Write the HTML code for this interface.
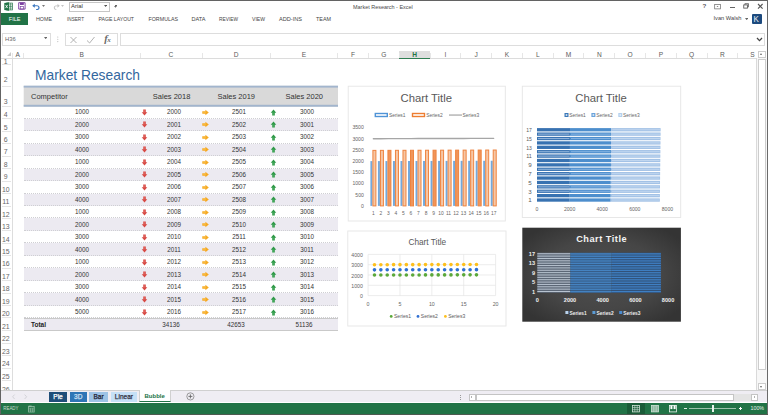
<!DOCTYPE html><html><head><meta charset="utf-8"><title>Market Research - Excel</title><style>
*{box-sizing:border-box;margin:0;padding:0}
html,body{width:768px;height:415px;overflow:hidden;background:#fff}
body{position:relative;font-family:"Liberation Sans",sans-serif;color:#444;font-size:6px}
.a{position:absolute}
.t{position:absolute;white-space:nowrap;line-height:1}
.tab{position:absolute;top:16px;font-size:5.7px;color:#444;line-height:6px;white-space:nowrap;letter-spacing:-0.1px}
.ch{position:absolute;top:51.2px;font-size:6.6px;line-height:8px;color:#5a5a5a;text-align:center;white-space:nowrap}
.rh{position:absolute;left:0.5px;width:10.5px;font-size:6.9px;line-height:8px;color:#666;text-align:center;white-space:nowrap}
.num{position:absolute;font-size:6.6px;transform:scaleX(0.95);line-height:7px;color:#333;text-align:center;white-space:nowrap;width:30px}
.hd{position:absolute;font-size:7.5px;line-height:9px;color:#333;white-space:nowrap}
</style></head><body>
<svg class="a" style="left:340px;top:0" width="90" height="12" viewBox="0 0 90 12" font-family="Liberation Sans, sans-serif"><text x="13" y="9" font-size="5.9" fill="#4a4a4a" textLength="59.8" lengthAdjust="spacingAndGlyphs">Market Research - Excel</text></svg>
<svg class="a" style="left:3.5px;top:2.2px" width="9" height="9" viewBox="0 0 10 10"><rect x="3" y="1.2" width="6.5" height="7.6" fill="#fff" stroke="#217346" stroke-width="0.8"/><path d="M5 3.2H9M5 5H9M5 6.8H9M7.3 1.2V8.8" stroke="#217346" stroke-width="0.6"/><path d="M0.3 1.2L5.6 0.2V9.8L0.3 8.8Z" fill="#217346"/><path d="M1.7 3.2L4.1 6.8M4.1 3.2L1.7 6.8" stroke="#fff" stroke-width="0.9"/></svg>
<svg class="a" style="left:18.2px;top:2.4px" width="7.8" height="7.8" viewBox="0 0 9 9"><path d="M0.8 0.8H8.2V8.2H0.8Z" fill="none" stroke="#7a3fa0" stroke-width="1.1"/><rect x="2.3" y="0.8" width="4.4" height="2.6" fill="#7a3fa0"/><rect x="2.6" y="5.3" width="3.8" height="2.9" fill="none" stroke="#7a3fa0" stroke-width="0.8"/></svg>
<svg class="a" style="left:32.3px;top:2.6px" width="8.4" height="7.6" viewBox="0 0 9 9" preserveAspectRatio="none"><path d="M1.2 3.2H5.2A2.3 2.3 0 0 1 5.2 7.8H4.4" fill="none" stroke="#3c78c0" stroke-width="1.3"/><path d="M0.2 3.2L3 0.8V5.6Z" fill="#3c78c0"/></svg>
<svg class="a" style="left:41.8px;top:5px" width="3" height="1.9" viewBox="0 0 3 1.9"><path d="M0 0H3L1.5 1.9Z" fill="#777"/></svg>
<svg class="a" style="left:51.5px;top:2.6px" width="8.4" height="7.6" viewBox="0 0 9 9" preserveAspectRatio="none"><path d="M7.2 3.4H4A2.2 2.2 0 0 0 4 7.6H4.6" fill="none" stroke="#c4c4c4" stroke-width="1.1"/><path d="M8.4 3.4L5.8 1.2V5.6Z" fill="#c4c4c4"/></svg>
<svg class="a" style="left:60.6px;top:5px" width="3" height="1.9" viewBox="0 0 3 1.9"><path d="M0 0H3L1.5 1.9Z" fill="#c4c4c4"/></svg>
<div class="a" style="left:69px;top:1.5px;width:40.5px;height:10px;border:1px solid #c6c6c6;background:#fff"></div>
<div class="t" style="left:71px;top:3.6px;font-size:5.9px;color:#333">Arial</div>
<svg class="a" style="left:103.8px;top:5px" width="3.2" height="2" viewBox="0 0 3.2 2"><path d="M0 0H3.2L1.6 2Z" fill="#555"/></svg>
<div class="a" style="left:114.6px;top:5px;width:2.6px;height:0.7px;background:#666"></div>
<svg class="a" style="left:114.4px;top:6.3px" width="3" height="1.8" viewBox="0 0 3 1.8"><path d="M0 0H3L1.5 1.8Z" fill="#666"/></svg>
<div class="t" style="left:702.5px;top:3px;font-size:6.2px;font-weight:bold;color:#555">?</div>
<svg class="a" style="left:713.8px;top:3.6px" width="7.4" height="6" viewBox="0 0 8 7"><rect x="0.5" y="0.5" width="6.6" height="5.2" fill="none" stroke="#666" stroke-width="0.8"/><path d="M2.6 3.6L3.8 2.2L5 3.6Z" fill="#666"/></svg>
<div class="a" style="left:730px;top:7px;width:4.5px;height:1px;background:#666"></div>
<svg class="a" style="left:742.8px;top:3.2px" width="6.6" height="6.4" viewBox="0 0 8 8"><rect x="0.8" y="2.4" width="4.6" height="4" fill="none" stroke="#5a5a5a" stroke-width="1.1"/><path d="M2.2 2.2V0.9H6.9V4.8H5.6" fill="none" stroke="#5a5a5a" stroke-width="1.1"/></svg>
<svg class="a" style="left:757px;top:3px" width="7" height="7" viewBox="0 0 7 7"><path d="M1 1L5.6 5.6M5.6 1L1 5.6" stroke="#555" stroke-width="1.1"/></svg>
<div class="t" style="left:713.5px;top:15.5px;font-size:5.7px;color:#444">Ivan Walsh</div>
<svg class="a" style="left:744.9px;top:17.7px" width="3.4" height="2.2" viewBox="0 0 3.4 2.2"><path d="M0 0H3.4L1.7 2.2Z" fill="#666"/></svg>
<div class="a" style="left:751.5px;top:13.5px;width:10px;height:10.5px;background:#1d4a7e;border-radius:1px;color:#f2f5f9;font-size:9.4px;line-height:10.8px;text-align:center"><span style="display:inline-block;transform:scaleX(0.85)">K</span></div>
<div class="a" style="left:1px;top:13px;width:27px;height:12px;background:#217346"></div>
<svg class="a" style="left:0;top:0" width="768" height="30" viewBox="0 0 768 30" font-family="Liberation Sans, sans-serif" font-size="5.9" fill="#444">
<text x="36" y="20.9" textLength="16" lengthAdjust="spacingAndGlyphs">HOME</text>
<text x="67" y="20.9" textLength="17" lengthAdjust="spacingAndGlyphs">INSERT</text>
<text x="98.5" y="20.9" textLength="35.5" lengthAdjust="spacingAndGlyphs">PAGE LAYOUT</text>
<text x="148.5" y="20.9" textLength="29.5" lengthAdjust="spacingAndGlyphs">FORMULAS</text>
<text x="191.5" y="20.9" textLength="14.0" lengthAdjust="spacingAndGlyphs">DATA</text>
<text x="219" y="20.9" textLength="19" lengthAdjust="spacingAndGlyphs">REVIEW</text>
<text x="252" y="20.9" textLength="13" lengthAdjust="spacingAndGlyphs">VIEW</text>
<text x="279" y="20.9" textLength="23" lengthAdjust="spacingAndGlyphs">ADD-INS</text>
<text x="316" y="20.9" textLength="15" lengthAdjust="spacingAndGlyphs">TEAM</text>
<text x="8.8" y="20.9" fill="#fff" textLength="11.6" lengthAdjust="spacingAndGlyphs">FILE</text>
</svg>
<div class="a" style="left:2px;top:33px;width:48.5px;height:12.6px;border:1px solid #dddddd;background:#fff"></div>
<div class="t" style="left:5px;top:36.9px;font-size:5.8px;color:#666">H36</div>
<svg class="a" style="left:43.8px;top:37.3px" width="3.4" height="2.2" viewBox="0 0 3.4 2.2"><path d="M0 0H3.4L1.7 2.2Z" fill="#666"/></svg>
<svg class="a" style="left:56px;top:35px" width="4" height="9" viewBox="0 0 4 9"><circle cx="1.8" cy="2" r="0.55" fill="#b5b5b5"/><circle cx="1.8" cy="4.3" r="0.55" fill="#b5b5b5"/><circle cx="1.8" cy="6.6" r="0.55" fill="#b5b5b5"/></svg>
<div class="a" style="left:65px;top:33px;width:52.5px;height:12.6px;border:1px solid #dddddd;background:#fff"></div>
<svg class="a" style="left:69px;top:35.6px" width="10" height="8" viewBox="0 0 10 8"><path d="M1.5 1L7.5 7M7.5 1L1.5 7" stroke="#a8a8a8" stroke-width="0.9"/></svg>
<svg class="a" style="left:86px;top:35.6px" width="10" height="8" viewBox="0 0 10 8"><path d="M1 4.5L3.6 7L8.5 1" fill="none" stroke="#a8a8a8" stroke-width="0.9"/></svg>
<div class="t" style="left:104.3px;top:33.6px;font-size:10.5px;font-family:'Liberation Serif',serif;font-style:italic;font-weight:bold;color:#6a6a6a;letter-spacing:-0.6px">f<span style="font-size:7px">x</span></div>
<div class="a" style="left:119.5px;top:33px;width:645.5px;height:12.6px;border:1px solid #dddddd;background:#fff"></div>
<svg class="a" style="left:755.5px;top:37px" width="7" height="5" viewBox="0 0 7 5"><path d="M1 1L3.5 3.6L6 1" fill="none" stroke="#444" stroke-width="1.3"/></svg>
<div class="a" style="left:1px;top:47.5px;width:756px;height:11.3px;background:#fff;border-bottom:1px solid #dcdcdc"></div>
<div class="a" style="left:7px;top:52px;border-left:4px solid transparent;border-bottom:4px solid #c8c8c8"></div>
<div class="ch" style="left:12px;width:11.5px">A</div>
<div class="a" style="left:11.5px;top:52.5px;width:1px;height:5.5px;background:#e6e6e6"></div>
<div class="ch" style="left:23.5px;width:116.5px">B</div>
<div class="a" style="left:23.0px;top:52.5px;width:1px;height:5.5px;background:#e6e6e6"></div>
<div class="ch" style="left:140px;width:62px">C</div>
<div class="a" style="left:139.5px;top:52.5px;width:1px;height:5.5px;background:#e6e6e6"></div>
<div class="ch" style="left:202px;width:68.30000000000001px">D</div>
<div class="a" style="left:201.5px;top:52.5px;width:1px;height:5.5px;background:#e6e6e6"></div>
<div class="ch" style="left:270.3px;width:67.39999999999998px">E</div>
<div class="a" style="left:269.8px;top:52.5px;width:1px;height:5.5px;background:#e6e6e6"></div>
<div class="ch" style="left:337.7px;width:30.78000000000003px">F</div>
<div class="a" style="left:337.2px;top:52.5px;width:1px;height:5.5px;background:#e6e6e6"></div>
<div class="ch" style="left:368.48px;width:30.779999999999973px">G</div>
<div class="a" style="left:367.98px;top:52.5px;width:1px;height:5.5px;background:#e6e6e6"></div>
<div class="a" style="left:399.26px;top:50.5px;width:30.779999999999973px;height:8.6px;background:#dedede;border-bottom:1.4px solid #2f7d52"></div>
<div class="ch" style="left:399.26px;width:30.779999999999973px;color:#217346;font-weight:bold">H</div>
<div class="a" style="left:398.76px;top:52.5px;width:1px;height:5.5px;background:#e6e6e6"></div>
<div class="ch" style="left:430.03999999999996px;width:30.779999999999973px">I</div>
<div class="a" style="left:429.53999999999996px;top:52.5px;width:1px;height:5.5px;background:#e6e6e6"></div>
<div class="ch" style="left:460.81999999999994px;width:30.779999999999973px">J</div>
<div class="a" style="left:460.31999999999994px;top:52.5px;width:1px;height:5.5px;background:#e6e6e6"></div>
<div class="ch" style="left:491.5999999999999px;width:30.779999999999973px">K</div>
<div class="a" style="left:491.0999999999999px;top:52.5px;width:1px;height:5.5px;background:#e6e6e6"></div>
<div class="ch" style="left:522.3799999999999px;width:30.779999999999973px">L</div>
<div class="a" style="left:521.8799999999999px;top:52.5px;width:1px;height:5.5px;background:#e6e6e6"></div>
<div class="ch" style="left:553.1599999999999px;width:30.779999999999973px">M</div>
<div class="a" style="left:552.6599999999999px;top:52.5px;width:1px;height:5.5px;background:#e6e6e6"></div>
<div class="ch" style="left:583.9399999999998px;width:30.779999999999973px">N</div>
<div class="a" style="left:583.4399999999998px;top:52.5px;width:1px;height:5.5px;background:#e6e6e6"></div>
<div class="ch" style="left:614.7199999999998px;width:30.779999999999973px">O</div>
<div class="a" style="left:614.2199999999998px;top:52.5px;width:1px;height:5.5px;background:#e6e6e6"></div>
<div class="ch" style="left:645.4999999999998px;width:30.779999999999973px">P</div>
<div class="a" style="left:644.9999999999998px;top:52.5px;width:1px;height:5.5px;background:#e6e6e6"></div>
<div class="ch" style="left:676.2799999999997px;width:30.779999999999973px">Q</div>
<div class="a" style="left:675.7799999999997px;top:52.5px;width:1px;height:5.5px;background:#e6e6e6"></div>
<div class="ch" style="left:707.0599999999997px;width:30.779999999999973px">R</div>
<div class="a" style="left:706.5599999999997px;top:52.5px;width:1px;height:5.5px;background:#e6e6e6"></div>
<div class="ch" style="left:737.8399999999997px;width:29.16000000000031px">S</div>
<div class="a" style="left:737.3399999999997px;top:52.5px;width:1px;height:5.5px;background:#e6e6e6"></div>
<div class="a" style="left:12px;top:58px;width:1px;height:332px;background:#dddddd"></div>
<div class="rh" style="top:58.0px">1</div>
<div class="rh" style="top:75.7px">2</div>
<div class="rh" style="top:98.4px">3</div>
<div class="rh" style="top:111.10000000000001px">4</div>
<div class="rh" style="top:123.54px">5</div>
<div class="rh" style="top:135.98px">6</div>
<div class="rh" style="top:148.42px">7</div>
<div class="rh" style="top:160.85999999999999px">8</div>
<div class="rh" style="top:173.29999999999998px">9</div>
<div class="rh" style="top:185.74px">10</div>
<div class="rh" style="top:198.18px">11</div>
<div class="rh" style="top:210.62px">12</div>
<div class="rh" style="top:223.06px">13</div>
<div class="rh" style="top:235.5px">14</div>
<div class="rh" style="top:247.94px">15</div>
<div class="rh" style="top:260.38px">16</div>
<div class="rh" style="top:272.82px">17</div>
<div class="rh" style="top:285.26px">18</div>
<div class="rh" style="top:297.7px">19</div>
<div class="rh" style="top:310.14px">20</div>
<div class="rh" style="top:322.58px">21</div>
<div class="rh" style="top:335.09999999999997px">22</div>
<div class="rh" style="top:347.7px">23</div>
<div class="rh" style="top:360.3px">24</div>
<div class="rh" style="top:372.9px">25</div>
<div class="rh" style="top:385.5px">26</div>
<div class="a" style="left:2px;top:64.2px;width:9px;height:1px;background:#e4e4e4"></div>
<div class="a" style="left:2px;top:85.5px;width:9px;height:1px;background:#e4e4e4"></div>
<div class="a" style="left:2px;top:106.0px;width:9px;height:1px;background:#e4e4e4"></div>
<div class="a" style="left:2px;top:118.44px;width:9px;height:1px;background:#e4e4e4"></div>
<div class="a" style="left:2px;top:130.88px;width:9px;height:1px;background:#e4e4e4"></div>
<div class="a" style="left:2px;top:143.32px;width:9px;height:1px;background:#e4e4e4"></div>
<div class="a" style="left:2px;top:155.76px;width:9px;height:1px;background:#e4e4e4"></div>
<div class="a" style="left:2px;top:168.2px;width:9px;height:1px;background:#e4e4e4"></div>
<div class="a" style="left:2px;top:180.64px;width:9px;height:1px;background:#e4e4e4"></div>
<div class="a" style="left:2px;top:193.07999999999998px;width:9px;height:1px;background:#e4e4e4"></div>
<div class="a" style="left:2px;top:205.51999999999998px;width:9px;height:1px;background:#e4e4e4"></div>
<div class="a" style="left:2px;top:217.95999999999998px;width:9px;height:1px;background:#e4e4e4"></div>
<div class="a" style="left:2px;top:230.39999999999998px;width:9px;height:1px;background:#e4e4e4"></div>
<div class="a" style="left:2px;top:242.84px;width:9px;height:1px;background:#e4e4e4"></div>
<div class="a" style="left:2px;top:255.28px;width:9px;height:1px;background:#e4e4e4"></div>
<div class="a" style="left:2px;top:267.72px;width:9px;height:1px;background:#e4e4e4"></div>
<div class="a" style="left:2px;top:280.15999999999997px;width:9px;height:1px;background:#e4e4e4"></div>
<div class="a" style="left:2px;top:292.6px;width:9px;height:1px;background:#e4e4e4"></div>
<div class="a" style="left:2px;top:305.03999999999996px;width:9px;height:1px;background:#e4e4e4"></div>
<div class="a" style="left:2px;top:317.48px;width:9px;height:1px;background:#e4e4e4"></div>
<div class="a" style="left:2px;top:330.0px;width:9px;height:1px;background:#e4e4e4"></div>
<div class="a" style="left:2px;top:342.5px;width:9px;height:1px;background:#e4e4e4"></div>
<div class="a" style="left:2px;top:355.1px;width:9px;height:1px;background:#e4e4e4"></div>
<div class="a" style="left:2px;top:367.7px;width:9px;height:1px;background:#e4e4e4"></div>
<div class="a" style="left:2px;top:380.3px;width:9px;height:1px;background:#e4e4e4"></div>
<div class="t" style="left:35.3px;top:68px;font-size:14.6px;color:#33679e;transform:scaleX(0.945);transform-origin:0 0">Market Research</div>
<svg class="a" style="left:0;top:80px" width="400" height="30" viewBox="0 80 400 30"><rect x="23.7" y="85.8" width="314.3" height="20.9" fill="#d9d9d9"/><rect x="23.7" y="85.7" width="314.3" height="1.9" fill="#a2b5cd"/><rect x="23.7" y="104.8" width="314.3" height="1.9" fill="#a2b5cd"/></svg>
<div class="hd" style="left:31px;top:92px">Competitor</div>
<div class="hd" style="left:152.8px;top:92px">Sales 2018</div>
<div class="hd" style="left:217.5px;top:92px">Sales 2019</div>
<div class="hd" style="left:285.5px;top:92px">Sales 2020</div>
<div class="a" style="left:23.7px;top:106.5px;width:314.3px;height:12.44px;background:#fff;border-bottom:1px dotted #cfcfd3"></div>
<div class="num" style="left:67px;top:108.21px">1000</div>
<svg class="a" style="left:140.6px;top:108.7px" width="7" height="7" viewBox="0 0 7 7"><path d="M2.2 0.5H4.8V3.2H6.3L3.5 6.6L0.7 3.2H2.2Z" fill="#d84a45"/><path d="M3 1V3.6" stroke="#e98680" stroke-width="0.7"/></svg>
<div class="num" style="left:158.8px;top:108.21px">2000</div>
<svg class="a" style="left:201.6px;top:108.7px" width="7" height="7" viewBox="0 0 7 7"><path d="M0.3 2.2H3.4V0.7L6.8 3.5L3.4 6.3V4.8H0.3Z" fill="#f6a821"/><path d="M1 3.1H4.2" stroke="#fbd060" stroke-width="0.7"/></svg>
<div class="num" style="left:223.5px;top:108.21px">2501</div>
<svg class="a" style="left:269.9px;top:108.7px" width="7" height="7" viewBox="0 0 7 7"><path d="M2.2 6.6H4.8V3.8H6.3L3.5 0.4L0.7 3.8H2.2Z" fill="#2f9a48"/><path d="M3 3.4V6" stroke="#6cc07f" stroke-width="0.7"/></svg>
<div class="num" style="left:291.5px;top:108.21px">3000</div>
<div class="a" style="left:23.7px;top:118.94px;width:314.3px;height:12.44px;background:#eceaf1;border-bottom:1px dotted #cfcfd3"></div>
<div class="num" style="left:67px;top:121.21px">2000</div>
<svg class="a" style="left:140.6px;top:121.19px" width="7" height="7" viewBox="0 0 7 7"><path d="M2.2 0.5H4.8V3.2H6.3L3.5 6.6L0.7 3.2H2.2Z" fill="#d84a45"/><path d="M3 1V3.6" stroke="#e98680" stroke-width="0.7"/></svg>
<div class="num" style="left:158.8px;top:121.21px">2001</div>
<svg class="a" style="left:201.6px;top:121.19px" width="7" height="7" viewBox="0 0 7 7"><path d="M0.3 2.2H3.4V0.7L6.8 3.5L3.4 6.3V4.8H0.3Z" fill="#f6a821"/><path d="M1 3.1H4.2" stroke="#fbd060" stroke-width="0.7"/></svg>
<div class="num" style="left:223.5px;top:121.21px">2502</div>
<svg class="a" style="left:269.9px;top:121.19px" width="7" height="7" viewBox="0 0 7 7"><path d="M2.2 6.6H4.8V3.8H6.3L3.5 0.4L0.7 3.8H2.2Z" fill="#2f9a48"/><path d="M3 3.4V6" stroke="#6cc07f" stroke-width="0.7"/></svg>
<div class="num" style="left:291.5px;top:121.21px">3001</div>
<div class="a" style="left:23.7px;top:131.38px;width:314.3px;height:12.44px;background:#fff;border-bottom:1px dotted #cfcfd3"></div>
<div class="num" style="left:67px;top:133.21px">3000</div>
<svg class="a" style="left:140.6px;top:133.67999999999998px" width="7" height="7" viewBox="0 0 7 7"><path d="M2.2 0.5H4.8V3.2H6.3L3.5 6.6L0.7 3.2H2.2Z" fill="#d84a45"/><path d="M3 1V3.6" stroke="#e98680" stroke-width="0.7"/></svg>
<div class="num" style="left:158.8px;top:133.21px">2002</div>
<svg class="a" style="left:201.6px;top:133.67999999999998px" width="7" height="7" viewBox="0 0 7 7"><path d="M0.3 2.2H3.4V0.7L6.8 3.5L3.4 6.3V4.8H0.3Z" fill="#f6a821"/><path d="M1 3.1H4.2" stroke="#fbd060" stroke-width="0.7"/></svg>
<div class="num" style="left:223.5px;top:133.21px">2503</div>
<svg class="a" style="left:269.9px;top:133.67999999999998px" width="7" height="7" viewBox="0 0 7 7"><path d="M2.2 6.6H4.8V3.8H6.3L3.5 0.4L0.7 3.8H2.2Z" fill="#2f9a48"/><path d="M3 3.4V6" stroke="#6cc07f" stroke-width="0.7"/></svg>
<div class="num" style="left:291.5px;top:133.21px">3002</div>
<div class="a" style="left:23.7px;top:143.82px;width:314.3px;height:12.44px;background:#eceaf1;border-bottom:1px dotted #cfcfd3"></div>
<div class="num" style="left:67px;top:146.21px">4000</div>
<svg class="a" style="left:140.6px;top:146.17px" width="7" height="7" viewBox="0 0 7 7"><path d="M2.2 0.5H4.8V3.2H6.3L3.5 6.6L0.7 3.2H2.2Z" fill="#d84a45"/><path d="M3 1V3.6" stroke="#e98680" stroke-width="0.7"/></svg>
<div class="num" style="left:158.8px;top:146.21px">2003</div>
<svg class="a" style="left:201.6px;top:146.17px" width="7" height="7" viewBox="0 0 7 7"><path d="M0.3 2.2H3.4V0.7L6.8 3.5L3.4 6.3V4.8H0.3Z" fill="#f6a821"/><path d="M1 3.1H4.2" stroke="#fbd060" stroke-width="0.7"/></svg>
<div class="num" style="left:223.5px;top:146.21px">2504</div>
<svg class="a" style="left:269.9px;top:146.17px" width="7" height="7" viewBox="0 0 7 7"><path d="M2.2 6.6H4.8V3.8H6.3L3.5 0.4L0.7 3.8H2.2Z" fill="#2f9a48"/><path d="M3 3.4V6" stroke="#6cc07f" stroke-width="0.7"/></svg>
<div class="num" style="left:291.5px;top:146.21px">3003</div>
<div class="a" style="left:23.7px;top:156.26px;width:314.3px;height:12.44px;background:#fff;border-bottom:1px dotted #cfcfd3"></div>
<div class="num" style="left:67px;top:158.21px">1000</div>
<svg class="a" style="left:140.6px;top:158.65999999999997px" width="7" height="7" viewBox="0 0 7 7"><path d="M2.2 0.5H4.8V3.2H6.3L3.5 6.6L0.7 3.2H2.2Z" fill="#d84a45"/><path d="M3 1V3.6" stroke="#e98680" stroke-width="0.7"/></svg>
<div class="num" style="left:158.8px;top:158.21px">2004</div>
<svg class="a" style="left:201.6px;top:158.65999999999997px" width="7" height="7" viewBox="0 0 7 7"><path d="M0.3 2.2H3.4V0.7L6.8 3.5L3.4 6.3V4.8H0.3Z" fill="#f6a821"/><path d="M1 3.1H4.2" stroke="#fbd060" stroke-width="0.7"/></svg>
<div class="num" style="left:223.5px;top:158.21px">2505</div>
<svg class="a" style="left:269.9px;top:158.65999999999997px" width="7" height="7" viewBox="0 0 7 7"><path d="M2.2 6.6H4.8V3.8H6.3L3.5 0.4L0.7 3.8H2.2Z" fill="#2f9a48"/><path d="M3 3.4V6" stroke="#6cc07f" stroke-width="0.7"/></svg>
<div class="num" style="left:291.5px;top:158.21px">3004</div>
<div class="a" style="left:23.7px;top:168.7px;width:314.3px;height:12.44px;background:#eceaf1;border-bottom:1px dotted #cfcfd3"></div>
<div class="num" style="left:67px;top:171.21px">2000</div>
<svg class="a" style="left:140.6px;top:171.14999999999998px" width="7" height="7" viewBox="0 0 7 7"><path d="M2.2 0.5H4.8V3.2H6.3L3.5 6.6L0.7 3.2H2.2Z" fill="#d84a45"/><path d="M3 1V3.6" stroke="#e98680" stroke-width="0.7"/></svg>
<div class="num" style="left:158.8px;top:171.21px">2005</div>
<svg class="a" style="left:201.6px;top:171.14999999999998px" width="7" height="7" viewBox="0 0 7 7"><path d="M0.3 2.2H3.4V0.7L6.8 3.5L3.4 6.3V4.8H0.3Z" fill="#f6a821"/><path d="M1 3.1H4.2" stroke="#fbd060" stroke-width="0.7"/></svg>
<div class="num" style="left:223.5px;top:171.21px">2506</div>
<svg class="a" style="left:269.9px;top:171.14999999999998px" width="7" height="7" viewBox="0 0 7 7"><path d="M2.2 6.6H4.8V3.8H6.3L3.5 0.4L0.7 3.8H2.2Z" fill="#2f9a48"/><path d="M3 3.4V6" stroke="#6cc07f" stroke-width="0.7"/></svg>
<div class="num" style="left:291.5px;top:171.21px">3005</div>
<div class="a" style="left:23.7px;top:181.14px;width:314.3px;height:12.44px;background:#fff;border-bottom:1px dotted #cfcfd3"></div>
<div class="num" style="left:67px;top:183.21px">3000</div>
<svg class="a" style="left:140.6px;top:183.64px" width="7" height="7" viewBox="0 0 7 7"><path d="M2.2 0.5H4.8V3.2H6.3L3.5 6.6L0.7 3.2H2.2Z" fill="#d84a45"/><path d="M3 1V3.6" stroke="#e98680" stroke-width="0.7"/></svg>
<div class="num" style="left:158.8px;top:183.21px">2006</div>
<svg class="a" style="left:201.6px;top:183.64px" width="7" height="7" viewBox="0 0 7 7"><path d="M0.3 2.2H3.4V0.7L6.8 3.5L3.4 6.3V4.8H0.3Z" fill="#f6a821"/><path d="M1 3.1H4.2" stroke="#fbd060" stroke-width="0.7"/></svg>
<div class="num" style="left:223.5px;top:183.21px">2507</div>
<svg class="a" style="left:269.9px;top:183.64px" width="7" height="7" viewBox="0 0 7 7"><path d="M2.2 6.6H4.8V3.8H6.3L3.5 0.4L0.7 3.8H2.2Z" fill="#2f9a48"/><path d="M3 3.4V6" stroke="#6cc07f" stroke-width="0.7"/></svg>
<div class="num" style="left:291.5px;top:183.21px">3006</div>
<div class="a" style="left:23.7px;top:193.57999999999998px;width:314.3px;height:12.44px;background:#eceaf1;border-bottom:1px dotted #cfcfd3"></div>
<div class="num" style="left:67px;top:196.21px">4000</div>
<svg class="a" style="left:140.6px;top:196.12999999999997px" width="7" height="7" viewBox="0 0 7 7"><path d="M2.2 0.5H4.8V3.2H6.3L3.5 6.6L0.7 3.2H2.2Z" fill="#d84a45"/><path d="M3 1V3.6" stroke="#e98680" stroke-width="0.7"/></svg>
<div class="num" style="left:158.8px;top:196.21px">2007</div>
<svg class="a" style="left:201.6px;top:196.12999999999997px" width="7" height="7" viewBox="0 0 7 7"><path d="M0.3 2.2H3.4V0.7L6.8 3.5L3.4 6.3V4.8H0.3Z" fill="#f6a821"/><path d="M1 3.1H4.2" stroke="#fbd060" stroke-width="0.7"/></svg>
<div class="num" style="left:223.5px;top:196.21px">2508</div>
<svg class="a" style="left:269.9px;top:196.12999999999997px" width="7" height="7" viewBox="0 0 7 7"><path d="M2.2 6.6H4.8V3.8H6.3L3.5 0.4L0.7 3.8H2.2Z" fill="#2f9a48"/><path d="M3 3.4V6" stroke="#6cc07f" stroke-width="0.7"/></svg>
<div class="num" style="left:291.5px;top:196.21px">3007</div>
<div class="a" style="left:23.7px;top:206.01999999999998px;width:314.3px;height:12.44px;background:#fff;border-bottom:1px dotted #cfcfd3"></div>
<div class="num" style="left:67px;top:208.21px">1000</div>
<svg class="a" style="left:140.6px;top:208.61999999999998px" width="7" height="7" viewBox="0 0 7 7"><path d="M2.2 0.5H4.8V3.2H6.3L3.5 6.6L0.7 3.2H2.2Z" fill="#d84a45"/><path d="M3 1V3.6" stroke="#e98680" stroke-width="0.7"/></svg>
<div class="num" style="left:158.8px;top:208.21px">2008</div>
<svg class="a" style="left:201.6px;top:208.61999999999998px" width="7" height="7" viewBox="0 0 7 7"><path d="M0.3 2.2H3.4V0.7L6.8 3.5L3.4 6.3V4.8H0.3Z" fill="#f6a821"/><path d="M1 3.1H4.2" stroke="#fbd060" stroke-width="0.7"/></svg>
<div class="num" style="left:223.5px;top:208.21px">2509</div>
<svg class="a" style="left:269.9px;top:208.61999999999998px" width="7" height="7" viewBox="0 0 7 7"><path d="M2.2 6.6H4.8V3.8H6.3L3.5 0.4L0.7 3.8H2.2Z" fill="#2f9a48"/><path d="M3 3.4V6" stroke="#6cc07f" stroke-width="0.7"/></svg>
<div class="num" style="left:291.5px;top:208.21px">3008</div>
<div class="a" style="left:23.7px;top:218.45999999999998px;width:314.3px;height:12.44px;background:#eceaf1;border-bottom:1px dotted #cfcfd3"></div>
<div class="num" style="left:67px;top:221.21px">2000</div>
<svg class="a" style="left:140.6px;top:221.10999999999996px" width="7" height="7" viewBox="0 0 7 7"><path d="M2.2 0.5H4.8V3.2H6.3L3.5 6.6L0.7 3.2H2.2Z" fill="#d84a45"/><path d="M3 1V3.6" stroke="#e98680" stroke-width="0.7"/></svg>
<div class="num" style="left:158.8px;top:221.21px">2009</div>
<svg class="a" style="left:201.6px;top:221.10999999999996px" width="7" height="7" viewBox="0 0 7 7"><path d="M0.3 2.2H3.4V0.7L6.8 3.5L3.4 6.3V4.8H0.3Z" fill="#f6a821"/><path d="M1 3.1H4.2" stroke="#fbd060" stroke-width="0.7"/></svg>
<div class="num" style="left:223.5px;top:221.21px">2510</div>
<svg class="a" style="left:269.9px;top:221.10999999999996px" width="7" height="7" viewBox="0 0 7 7"><path d="M2.2 6.6H4.8V3.8H6.3L3.5 0.4L0.7 3.8H2.2Z" fill="#2f9a48"/><path d="M3 3.4V6" stroke="#6cc07f" stroke-width="0.7"/></svg>
<div class="num" style="left:291.5px;top:221.21px">3009</div>
<div class="a" style="left:23.7px;top:230.89999999999998px;width:314.3px;height:12.44px;background:#fff;border-bottom:1px dotted #cfcfd3"></div>
<div class="num" style="left:67px;top:233.21px">3000</div>
<svg class="a" style="left:140.6px;top:233.59999999999997px" width="7" height="7" viewBox="0 0 7 7"><path d="M2.2 0.5H4.8V3.2H6.3L3.5 6.6L0.7 3.2H2.2Z" fill="#d84a45"/><path d="M3 1V3.6" stroke="#e98680" stroke-width="0.7"/></svg>
<div class="num" style="left:158.8px;top:233.21px">2010</div>
<svg class="a" style="left:201.6px;top:233.59999999999997px" width="7" height="7" viewBox="0 0 7 7"><path d="M0.3 2.2H3.4V0.7L6.8 3.5L3.4 6.3V4.8H0.3Z" fill="#f6a821"/><path d="M1 3.1H4.2" stroke="#fbd060" stroke-width="0.7"/></svg>
<div class="num" style="left:223.5px;top:233.21px">2511</div>
<svg class="a" style="left:269.9px;top:233.59999999999997px" width="7" height="7" viewBox="0 0 7 7"><path d="M2.2 6.6H4.8V3.8H6.3L3.5 0.4L0.7 3.8H2.2Z" fill="#2f9a48"/><path d="M3 3.4V6" stroke="#6cc07f" stroke-width="0.7"/></svg>
<div class="num" style="left:291.5px;top:233.21px">3010</div>
<div class="a" style="left:23.7px;top:243.34px;width:314.3px;height:12.44px;background:#eceaf1;border-bottom:1px dotted #cfcfd3"></div>
<div class="num" style="left:67px;top:246.21px">4000</div>
<svg class="a" style="left:140.6px;top:246.09px" width="7" height="7" viewBox="0 0 7 7"><path d="M2.2 0.5H4.8V3.2H6.3L3.5 6.6L0.7 3.2H2.2Z" fill="#d84a45"/><path d="M3 1V3.6" stroke="#e98680" stroke-width="0.7"/></svg>
<div class="num" style="left:158.8px;top:246.21px">2011</div>
<svg class="a" style="left:201.6px;top:246.09px" width="7" height="7" viewBox="0 0 7 7"><path d="M0.3 2.2H3.4V0.7L6.8 3.5L3.4 6.3V4.8H0.3Z" fill="#f6a821"/><path d="M1 3.1H4.2" stroke="#fbd060" stroke-width="0.7"/></svg>
<div class="num" style="left:223.5px;top:246.21px">2512</div>
<svg class="a" style="left:269.9px;top:246.09px" width="7" height="7" viewBox="0 0 7 7"><path d="M2.2 6.6H4.8V3.8H6.3L3.5 0.4L0.7 3.8H2.2Z" fill="#2f9a48"/><path d="M3 3.4V6" stroke="#6cc07f" stroke-width="0.7"/></svg>
<div class="num" style="left:291.5px;top:246.21px">3011</div>
<div class="a" style="left:23.7px;top:255.78px;width:314.3px;height:12.44px;background:#fff;border-bottom:1px dotted #cfcfd3"></div>
<div class="num" style="left:67px;top:258.21px">1000</div>
<svg class="a" style="left:140.6px;top:258.58000000000004px" width="7" height="7" viewBox="0 0 7 7"><path d="M2.2 0.5H4.8V3.2H6.3L3.5 6.6L0.7 3.2H2.2Z" fill="#d84a45"/><path d="M3 1V3.6" stroke="#e98680" stroke-width="0.7"/></svg>
<div class="num" style="left:158.8px;top:258.21px">2012</div>
<svg class="a" style="left:201.6px;top:258.58000000000004px" width="7" height="7" viewBox="0 0 7 7"><path d="M0.3 2.2H3.4V0.7L6.8 3.5L3.4 6.3V4.8H0.3Z" fill="#f6a821"/><path d="M1 3.1H4.2" stroke="#fbd060" stroke-width="0.7"/></svg>
<div class="num" style="left:223.5px;top:258.21px">2513</div>
<svg class="a" style="left:269.9px;top:258.58000000000004px" width="7" height="7" viewBox="0 0 7 7"><path d="M2.2 6.6H4.8V3.8H6.3L3.5 0.4L0.7 3.8H2.2Z" fill="#2f9a48"/><path d="M3 3.4V6" stroke="#6cc07f" stroke-width="0.7"/></svg>
<div class="num" style="left:291.5px;top:258.21px">3012</div>
<div class="a" style="left:23.7px;top:268.22px;width:314.3px;height:12.44px;background:#eceaf1;border-bottom:1px dotted #cfcfd3"></div>
<div class="num" style="left:67px;top:271.21px">2000</div>
<svg class="a" style="left:140.6px;top:271.07px" width="7" height="7" viewBox="0 0 7 7"><path d="M2.2 0.5H4.8V3.2H6.3L3.5 6.6L0.7 3.2H2.2Z" fill="#d84a45"/><path d="M3 1V3.6" stroke="#e98680" stroke-width="0.7"/></svg>
<div class="num" style="left:158.8px;top:271.21px">2013</div>
<svg class="a" style="left:201.6px;top:271.07px" width="7" height="7" viewBox="0 0 7 7"><path d="M0.3 2.2H3.4V0.7L6.8 3.5L3.4 6.3V4.8H0.3Z" fill="#f6a821"/><path d="M1 3.1H4.2" stroke="#fbd060" stroke-width="0.7"/></svg>
<div class="num" style="left:223.5px;top:271.21px">2514</div>
<svg class="a" style="left:269.9px;top:271.07px" width="7" height="7" viewBox="0 0 7 7"><path d="M2.2 6.6H4.8V3.8H6.3L3.5 0.4L0.7 3.8H2.2Z" fill="#2f9a48"/><path d="M3 3.4V6" stroke="#6cc07f" stroke-width="0.7"/></svg>
<div class="num" style="left:291.5px;top:271.21px">3013</div>
<div class="a" style="left:23.7px;top:280.65999999999997px;width:314.3px;height:12.44px;background:#fff;border-bottom:1px dotted #cfcfd3"></div>
<div class="num" style="left:67px;top:283.21px">3000</div>
<svg class="a" style="left:140.6px;top:283.55999999999995px" width="7" height="7" viewBox="0 0 7 7"><path d="M2.2 0.5H4.8V3.2H6.3L3.5 6.6L0.7 3.2H2.2Z" fill="#d84a45"/><path d="M3 1V3.6" stroke="#e98680" stroke-width="0.7"/></svg>
<div class="num" style="left:158.8px;top:283.21px">2014</div>
<svg class="a" style="left:201.6px;top:283.55999999999995px" width="7" height="7" viewBox="0 0 7 7"><path d="M0.3 2.2H3.4V0.7L6.8 3.5L3.4 6.3V4.8H0.3Z" fill="#f6a821"/><path d="M1 3.1H4.2" stroke="#fbd060" stroke-width="0.7"/></svg>
<div class="num" style="left:223.5px;top:283.21px">2515</div>
<svg class="a" style="left:269.9px;top:283.55999999999995px" width="7" height="7" viewBox="0 0 7 7"><path d="M2.2 6.6H4.8V3.8H6.3L3.5 0.4L0.7 3.8H2.2Z" fill="#2f9a48"/><path d="M3 3.4V6" stroke="#6cc07f" stroke-width="0.7"/></svg>
<div class="num" style="left:291.5px;top:283.21px">3014</div>
<div class="a" style="left:23.7px;top:293.1px;width:314.3px;height:12.44px;background:#eceaf1;border-bottom:1px dotted #cfcfd3"></div>
<div class="num" style="left:67px;top:296.21px">4000</div>
<svg class="a" style="left:140.6px;top:296.05px" width="7" height="7" viewBox="0 0 7 7"><path d="M2.2 0.5H4.8V3.2H6.3L3.5 6.6L0.7 3.2H2.2Z" fill="#d84a45"/><path d="M3 1V3.6" stroke="#e98680" stroke-width="0.7"/></svg>
<div class="num" style="left:158.8px;top:296.21px">2015</div>
<svg class="a" style="left:201.6px;top:296.05px" width="7" height="7" viewBox="0 0 7 7"><path d="M0.3 2.2H3.4V0.7L6.8 3.5L3.4 6.3V4.8H0.3Z" fill="#f6a821"/><path d="M1 3.1H4.2" stroke="#fbd060" stroke-width="0.7"/></svg>
<div class="num" style="left:223.5px;top:296.21px">2516</div>
<svg class="a" style="left:269.9px;top:296.05px" width="7" height="7" viewBox="0 0 7 7"><path d="M2.2 6.6H4.8V3.8H6.3L3.5 0.4L0.7 3.8H2.2Z" fill="#2f9a48"/><path d="M3 3.4V6" stroke="#6cc07f" stroke-width="0.7"/></svg>
<div class="num" style="left:291.5px;top:296.21px">3015</div>
<div class="a" style="left:23.7px;top:305.53999999999996px;width:314.3px;height:12.44px;background:#fff;border-bottom:1px dotted #cfcfd3"></div>
<div class="num" style="left:67px;top:308.21px">5000</div>
<svg class="a" style="left:140.6px;top:308.53999999999996px" width="7" height="7" viewBox="0 0 7 7"><path d="M2.2 0.5H4.8V3.2H6.3L3.5 6.6L0.7 3.2H2.2Z" fill="#d84a45"/><path d="M3 1V3.6" stroke="#e98680" stroke-width="0.7"/></svg>
<div class="num" style="left:158.8px;top:308.21px">2016</div>
<svg class="a" style="left:201.6px;top:308.53999999999996px" width="7" height="7" viewBox="0 0 7 7"><path d="M0.3 2.2H3.4V0.7L6.8 3.5L3.4 6.3V4.8H0.3Z" fill="#f6a821"/><path d="M1 3.1H4.2" stroke="#fbd060" stroke-width="0.7"/></svg>
<div class="num" style="left:223.5px;top:308.21px">2517</div>
<svg class="a" style="left:269.9px;top:308.53999999999996px" width="7" height="7" viewBox="0 0 7 7"><path d="M2.2 6.6H4.8V3.8H6.3L3.5 0.4L0.7 3.8H2.2Z" fill="#2f9a48"/><path d="M3 3.4V6" stroke="#6cc07f" stroke-width="0.7"/></svg>
<div class="num" style="left:291.5px;top:308.21px">3016</div>
<div class="a" style="left:23.7px;top:317.98px;width:314.3px;height:12.6px;background:#eceaf1;border-top:1px solid #c9c9c9;border-bottom:1px solid #c9c9c9"></div>
<div class="t" style="left:31px;top:321.88px;font-size:6.5px;font-weight:bold;color:#222">Total</div>
<div class="num" style="left:156.4px;top:321.21px">34136</div>
<div class="num" style="left:221.0px;top:321.21px">42653</div>
<div class="num" style="left:289.0px;top:321.21px">51136</div>
<svg class="a" style="left:0;top:0" width="768" height="415" viewBox="0 0 768 415" font-family="Liberation Sans, sans-serif">
<defs><radialGradient id="dk" cx="50%" cy="50%" r="62%"><stop offset="0" stop-color="#4f4f4f"/><stop offset="0.6" stop-color="#464646"/><stop offset="1" stop-color="#343434"/></radialGradient></defs>
<rect x="348.2" y="86.2" width="157.1" height="134.8" fill="#fff" stroke="#e5e5e5" stroke-width="0.9"/>
<text x="426.3" y="102" font-size="10.3" fill="#595959" text-anchor="middle" textLength="51.5" lengthAdjust="spacingAndGlyphs">Chart Title</text>
<rect x="375.3" y="113.5" width="12" height="3" fill="#fff" stroke="#4f93d6" stroke-width="1.4"/>
<text x="389" y="116.8" font-size="5.8" fill="#666" textLength="16.5" lengthAdjust="spacingAndGlyphs">Series1</text>
<rect x="412.5" y="113.5" width="12" height="3" fill="#fff" stroke="#ed7d31" stroke-width="1.4"/>
<text x="426.2" y="116.8" font-size="5.8" fill="#666" textLength="16.5" lengthAdjust="spacingAndGlyphs">Series2</text>
<rect x="449" y="114.5" width="13" height="1.1" fill="#9c9c9c"/>
<text x="462.6" y="116.8" font-size="5.8" fill="#666" textLength="16.5" lengthAdjust="spacingAndGlyphs">Series3</text>
<text x="363.8" y="207.7" font-size="5.1" fill="#666" text-anchor="end">0</text>
<text x="363.8" y="196.5" font-size="5.1" fill="#666" text-anchor="end">500</text>
<text x="363.8" y="185.3" font-size="5.1" fill="#666" text-anchor="end">1000</text>
<text x="363.8" y="174.1" font-size="5.1" fill="#666" text-anchor="end">1500</text>
<text x="363.8" y="162.9" font-size="5.1" fill="#666" text-anchor="end">2000</text>
<text x="363.8" y="151.7" font-size="5.1" fill="#666" text-anchor="end">2500</text>
<text x="363.8" y="140.5" font-size="5.1" fill="#666" text-anchor="end">3000</text>
<text x="363.8" y="129.3" font-size="5.1" fill="#666" text-anchor="end">3500</text>
<rect x="370.40" y="161.10" width="2" height="44.80" fill="#74a9dc"/>
<rect x="372.90" y="150.38" width="3" height="55.52" fill="#f7c7a5" stroke="#ee8440" stroke-width="1"/>
<text x="373.36" y="214.9" font-size="4.9" fill="#666" text-anchor="middle">1</text>
<rect x="377.92" y="161.08" width="2" height="44.82" fill="#74a9dc"/>
<rect x="380.42" y="150.36" width="3" height="55.54" fill="#f7c7a5" stroke="#ee8440" stroke-width="1"/>
<text x="380.88" y="214.9" font-size="4.9" fill="#666" text-anchor="middle">2</text>
<rect x="385.44" y="161.06" width="2" height="44.84" fill="#74a9dc"/>
<rect x="387.94" y="150.33" width="3" height="55.57" fill="#f0955a" stroke="#ee8440" stroke-width="1"/>
<text x="388.40" y="214.9" font-size="4.9" fill="#666" text-anchor="middle">3</text>
<rect x="392.96" y="161.03" width="2" height="44.87" fill="#74a9dc"/>
<rect x="395.46" y="150.31" width="3" height="55.59" fill="#f7c7a5" stroke="#ee8440" stroke-width="1"/>
<text x="395.92" y="214.9" font-size="4.9" fill="#666" text-anchor="middle">4</text>
<rect x="400.48" y="161.01" width="2" height="44.89" fill="#74a9dc"/>
<rect x="402.98" y="150.29" width="3" height="55.61" fill="#f7c7a5" stroke="#ee8440" stroke-width="1"/>
<text x="403.44" y="214.9" font-size="4.9" fill="#666" text-anchor="middle">5</text>
<rect x="408.00" y="160.99" width="2" height="44.91" fill="#74a9dc"/>
<rect x="410.50" y="150.27" width="3" height="55.63" fill="#f0955a" stroke="#ee8440" stroke-width="1"/>
<text x="410.96" y="214.9" font-size="4.9" fill="#666" text-anchor="middle">6</text>
<rect x="415.52" y="160.97" width="2" height="44.93" fill="#74a9dc"/>
<rect x="418.02" y="150.24" width="3" height="55.66" fill="#f7c7a5" stroke="#ee8440" stroke-width="1"/>
<text x="418.48" y="214.9" font-size="4.9" fill="#666" text-anchor="middle">7</text>
<rect x="423.04" y="160.94" width="2" height="44.96" fill="#74a9dc"/>
<rect x="425.54" y="150.22" width="3" height="55.68" fill="#f7c7a5" stroke="#ee8440" stroke-width="1"/>
<text x="426.00" y="214.9" font-size="4.9" fill="#666" text-anchor="middle">8</text>
<rect x="430.56" y="160.92" width="2" height="44.98" fill="#74a9dc"/>
<rect x="433.06" y="150.20" width="3" height="55.70" fill="#f0955a" stroke="#ee8440" stroke-width="1"/>
<text x="433.52" y="214.9" font-size="4.9" fill="#666" text-anchor="middle">9</text>
<rect x="438.08" y="160.90" width="2" height="45.00" fill="#74a9dc"/>
<rect x="440.58" y="150.18" width="3" height="55.72" fill="#f7c7a5" stroke="#ee8440" stroke-width="1"/>
<text x="441.04" y="214.9" font-size="4.9" fill="#666" text-anchor="middle">10</text>
<rect x="445.60" y="160.88" width="2" height="45.02" fill="#74a9dc"/>
<rect x="448.10" y="150.15" width="3" height="55.75" fill="#f7c7a5" stroke="#ee8440" stroke-width="1"/>
<text x="448.56" y="214.9" font-size="4.9" fill="#666" text-anchor="middle">11</text>
<rect x="453.12" y="160.85" width="2" height="45.05" fill="#74a9dc"/>
<rect x="455.62" y="150.13" width="3" height="55.77" fill="#f0955a" stroke="#ee8440" stroke-width="1"/>
<text x="456.08" y="214.9" font-size="4.9" fill="#666" text-anchor="middle">12</text>
<rect x="460.64" y="160.83" width="2" height="45.07" fill="#74a9dc"/>
<rect x="463.14" y="150.11" width="3" height="55.79" fill="#f7c7a5" stroke="#ee8440" stroke-width="1"/>
<text x="463.60" y="214.9" font-size="4.9" fill="#666" text-anchor="middle">13</text>
<rect x="468.16" y="160.81" width="2" height="45.09" fill="#74a9dc"/>
<rect x="470.66" y="150.09" width="3" height="55.81" fill="#f7c7a5" stroke="#ee8440" stroke-width="1"/>
<text x="471.12" y="214.9" font-size="4.9" fill="#666" text-anchor="middle">14</text>
<rect x="475.68" y="160.79" width="2" height="45.11" fill="#74a9dc"/>
<rect x="478.18" y="150.06" width="3" height="55.84" fill="#f0955a" stroke="#ee8440" stroke-width="1"/>
<text x="478.64" y="214.9" font-size="4.9" fill="#666" text-anchor="middle">15</text>
<rect x="483.20" y="160.76" width="2" height="45.14" fill="#74a9dc"/>
<rect x="485.70" y="150.04" width="3" height="55.86" fill="#f7c7a5" stroke="#ee8440" stroke-width="1"/>
<text x="486.16" y="214.9" font-size="4.9" fill="#666" text-anchor="middle">16</text>
<rect x="490.72" y="160.74" width="2" height="45.16" fill="#74a9dc"/>
<rect x="493.22" y="150.02" width="3" height="55.88" fill="#f7c7a5" stroke="#ee8440" stroke-width="1"/>
<text x="493.68" y="214.9" font-size="4.9" fill="#666" text-anchor="middle">17</text>
<polyline points="373.36,138.70 380.88,138.68 388.40,138.66 395.92,138.63 403.44,138.61 410.96,138.59 418.48,138.57 426.00,138.54 433.52,138.52 441.04,138.50 448.56,138.48 456.08,138.45 463.60,138.43 471.12,138.41 478.64,138.39 486.16,138.36 493.68,138.34" fill="none" stroke="#a6a6a6" stroke-width="1.4" stroke-linecap="round"/>
<rect x="522.3" y="86.2" width="158.4" height="131.3" fill="#fff" stroke="#e5e5e5" stroke-width="0.9"/>
<text x="601" y="102" font-size="10.3" fill="#595959" text-anchor="middle" textLength="51.5" lengthAdjust="spacingAndGlyphs">Chart Title</text>
<rect x="564.5" y="113" width="4" height="4" fill="#3b78b8"/>
<rect x="565.7" y="114.2" width="1.6" height="1.6" fill="#e8f0f8"/>
<text x="569.3" y="116.8" font-size="5.8" fill="#666" textLength="16.5" lengthAdjust="spacingAndGlyphs">Series1</text>
<rect x="591.4" y="113" width="4" height="4" fill="#6aa3da"/>
<rect x="592.6" y="114.2" width="1.6" height="1.6" fill="#e8f0f8"/>
<text x="596.1999999999999" y="116.8" font-size="5.8" fill="#666" textLength="16.5" lengthAdjust="spacingAndGlyphs">Series2</text>
<rect x="618.3" y="113" width="4" height="4" fill="#b4d0ee"/>
<rect x="619.5" y="114.2" width="1.6" height="1.6" fill="#e8f0f8"/>
<text x="623.0999999999999" y="116.8" font-size="5.8" fill="#666" textLength="16.5" lengthAdjust="spacingAndGlyphs">Series3</text>
<rect x="537.00" y="128.10" width="33.01" height="3.3" fill="#3872b1"/>
<rect x="570.01" y="128.10" width="41.22" height="3.3" fill="#4d8ecd"/>
<rect x="611.23" y="128.10" width="49.39" height="3.3" fill="#a3c2e6"/>
<rect x="612.23" y="129.30" width="47.79" height="0.9" fill="#c3d8f0"/>
<text x="531.8" y="132.00" font-size="6.2" fill="#5a5a5a" text-anchor="end" textLength="5.6" lengthAdjust="spacingAndGlyphs">17</text>
<rect x="537.00" y="132.49" width="33.00" height="3.3" fill="#3872b1"/>
<rect x="570.00" y="132.49" width="41.20" height="3.3" fill="#4d8ecd"/>
<rect x="611.20" y="132.49" width="49.37" height="3.3" fill="#a3c2e6"/>
<rect x="538.00" y="133.59" width="31.40" height="1.1" fill="#8fb2da"/>
<rect x="571.00" y="133.69" width="39.60" height="0.9" fill="#8ab6e4"/>
<rect x="612.20" y="133.69" width="47.77" height="0.9" fill="#c3d8f0"/>
<rect x="537.00" y="136.89" width="32.98" height="3.3" fill="#3872b1"/>
<rect x="569.98" y="136.89" width="41.18" height="3.3" fill="#4d8ecd"/>
<rect x="611.16" y="136.89" width="49.35" height="3.3" fill="#a3c2e6"/>
<rect x="538.00" y="137.99" width="31.38" height="1.1" fill="#8fb2da"/>
<rect x="570.98" y="138.09" width="39.58" height="0.9" fill="#8ab6e4"/>
<rect x="612.16" y="138.09" width="47.75" height="0.9" fill="#c3d8f0"/>
<text x="531.8" y="140.79" font-size="6.2" fill="#5a5a5a" text-anchor="end" textLength="5.6" lengthAdjust="spacingAndGlyphs">15</text>
<rect x="537.00" y="141.28" width="32.96" height="3.3" fill="#3872b1"/>
<rect x="569.96" y="141.28" width="41.17" height="3.3" fill="#4d8ecd"/>
<rect x="611.13" y="141.28" width="49.34" height="3.3" fill="#a3c2e6"/>
<rect x="612.13" y="142.48" width="47.74" height="0.9" fill="#c3d8f0"/>
<rect x="537.00" y="145.67" width="32.95" height="3.3" fill="#3872b1"/>
<rect x="569.95" y="145.67" width="41.15" height="3.3" fill="#4d8ecd"/>
<rect x="611.10" y="145.67" width="49.32" height="3.3" fill="#a3c2e6"/>
<rect x="612.10" y="146.87" width="47.72" height="0.9" fill="#c3d8f0"/>
<text x="531.8" y="149.57" font-size="6.2" fill="#5a5a5a" text-anchor="end" textLength="5.6" lengthAdjust="spacingAndGlyphs">13</text>
<rect x="537.00" y="150.06" width="32.93" height="3.3" fill="#3872b1"/>
<rect x="569.93" y="150.06" width="41.13" height="3.3" fill="#4d8ecd"/>
<rect x="611.06" y="150.06" width="49.31" height="3.3" fill="#a3c2e6"/>
<rect x="538.00" y="151.16" width="31.33" height="1.1" fill="#8fb2da"/>
<rect x="570.93" y="151.26" width="39.53" height="0.9" fill="#8ab6e4"/>
<rect x="612.06" y="151.26" width="47.71" height="0.9" fill="#c3d8f0"/>
<rect x="537.00" y="154.46" width="32.91" height="3.3" fill="#3872b1"/>
<rect x="569.91" y="154.46" width="41.12" height="3.3" fill="#4d8ecd"/>
<rect x="611.03" y="154.46" width="49.29" height="3.3" fill="#a3c2e6"/>
<rect x="538.00" y="155.56" width="31.31" height="1.1" fill="#8fb2da"/>
<rect x="570.91" y="155.66" width="39.52" height="0.9" fill="#8ab6e4"/>
<rect x="612.03" y="155.66" width="47.69" height="0.9" fill="#c3d8f0"/>
<text x="531.8" y="158.36" font-size="6.2" fill="#5a5a5a" text-anchor="end" textLength="5.6" lengthAdjust="spacingAndGlyphs">11</text>
<rect x="537.00" y="158.85" width="32.90" height="3.3" fill="#3872b1"/>
<rect x="569.90" y="158.85" width="41.10" height="3.3" fill="#4d8ecd"/>
<rect x="611.00" y="158.85" width="49.27" height="3.3" fill="#a3c2e6"/>
<rect x="612.00" y="160.05" width="47.67" height="0.9" fill="#c3d8f0"/>
<rect x="537.00" y="163.24" width="32.88" height="3.3" fill="#3872b1"/>
<rect x="569.88" y="163.24" width="41.08" height="3.3" fill="#4d8ecd"/>
<rect x="610.97" y="163.24" width="49.26" height="3.3" fill="#a3c2e6"/>
<rect x="611.97" y="164.44" width="47.66" height="0.9" fill="#c3d8f0"/>
<text x="531.8" y="167.14" font-size="6.2" fill="#5a5a5a" text-anchor="end">9</text>
<rect x="537.00" y="167.64" width="32.86" height="3.3" fill="#3872b1"/>
<rect x="569.86" y="167.64" width="41.07" height="3.3" fill="#4d8ecd"/>
<rect x="610.93" y="167.64" width="49.24" height="3.3" fill="#a3c2e6"/>
<rect x="538.00" y="168.74" width="31.26" height="1.1" fill="#8fb2da"/>
<rect x="570.86" y="168.84" width="39.47" height="0.9" fill="#8ab6e4"/>
<rect x="611.93" y="168.84" width="47.64" height="0.9" fill="#c3d8f0"/>
<rect x="537.00" y="172.03" width="32.85" height="3.3" fill="#3872b1"/>
<rect x="569.85" y="172.03" width="41.05" height="3.3" fill="#4d8ecd"/>
<rect x="610.90" y="172.03" width="49.22" height="3.3" fill="#a3c2e6"/>
<rect x="538.00" y="173.13" width="31.25" height="1.1" fill="#8fb2da"/>
<rect x="570.85" y="173.23" width="39.45" height="0.9" fill="#8ab6e4"/>
<rect x="611.90" y="173.23" width="47.62" height="0.9" fill="#c3d8f0"/>
<text x="531.8" y="175.93" font-size="6.2" fill="#5a5a5a" text-anchor="end">7</text>
<rect x="537.00" y="176.42" width="32.83" height="3.3" fill="#3872b1"/>
<rect x="569.83" y="176.42" width="41.04" height="3.3" fill="#4d8ecd"/>
<rect x="610.87" y="176.42" width="49.21" height="3.3" fill="#a3c2e6"/>
<rect x="611.87" y="177.62" width="47.61" height="0.9" fill="#c3d8f0"/>
<rect x="537.00" y="180.82" width="32.82" height="3.3" fill="#3872b1"/>
<rect x="569.82" y="180.82" width="41.02" height="3.3" fill="#4d8ecd"/>
<rect x="610.83" y="180.82" width="49.19" height="3.3" fill="#a3c2e6"/>
<rect x="611.83" y="182.02" width="47.59" height="0.9" fill="#c3d8f0"/>
<text x="531.8" y="184.72" font-size="6.2" fill="#5a5a5a" text-anchor="end">5</text>
<rect x="537.00" y="185.21" width="32.80" height="3.3" fill="#3872b1"/>
<rect x="569.80" y="185.21" width="41.00" height="3.3" fill="#4d8ecd"/>
<rect x="610.80" y="185.21" width="49.17" height="3.3" fill="#a3c2e6"/>
<rect x="538.00" y="186.31" width="31.20" height="1.1" fill="#8fb2da"/>
<rect x="570.80" y="186.41" width="39.40" height="0.9" fill="#8ab6e4"/>
<rect x="611.80" y="186.41" width="47.57" height="0.9" fill="#c3d8f0"/>
<rect x="537.00" y="189.60" width="32.78" height="3.3" fill="#3872b1"/>
<rect x="569.78" y="189.60" width="40.99" height="3.3" fill="#4d8ecd"/>
<rect x="610.77" y="189.60" width="49.16" height="3.3" fill="#a3c2e6"/>
<rect x="538.00" y="190.70" width="31.18" height="1.1" fill="#8fb2da"/>
<rect x="570.78" y="190.80" width="39.39" height="0.9" fill="#8ab6e4"/>
<rect x="611.77" y="190.80" width="47.56" height="0.9" fill="#c3d8f0"/>
<text x="531.8" y="193.50" font-size="6.2" fill="#5a5a5a" text-anchor="end">3</text>
<rect x="537.00" y="194.00" width="32.77" height="3.3" fill="#3872b1"/>
<rect x="569.77" y="194.00" width="40.97" height="3.3" fill="#4d8ecd"/>
<rect x="610.74" y="194.00" width="49.14" height="3.3" fill="#a3c2e6"/>
<rect x="611.74" y="195.19" width="47.54" height="0.9" fill="#c3d8f0"/>
<rect x="537.00" y="198.39" width="32.75" height="3.3" fill="#3872b1"/>
<rect x="569.75" y="198.39" width="40.95" height="3.3" fill="#4d8ecd"/>
<rect x="610.70" y="198.39" width="49.12" height="3.3" fill="#a3c2e6"/>
<rect x="611.70" y="199.59" width="47.52" height="0.9" fill="#c3d8f0"/>
<text x="531.8" y="202.29" font-size="6.2" fill="#5a5a5a" text-anchor="end">1</text>
<text x="537.0" y="211.2" font-size="5.1" fill="#666" text-anchor="middle">0</text>
<text x="569.6" y="211.2" font-size="5.1" fill="#666" text-anchor="middle">2000</text>
<text x="602.2" y="211.2" font-size="5.1" fill="#666" text-anchor="middle">4000</text>
<text x="634.8" y="211.2" font-size="5.1" fill="#666" text-anchor="middle">6000</text>
<text x="667.4" y="211.2" font-size="5.1" fill="#666" text-anchor="middle">8000</text>
<rect x="347.8" y="231" width="158.2" height="95" fill="#fff" stroke="#e5e5e5" stroke-width="0.9"/>
<text x="427.3" y="244.8" font-size="8.4" fill="#595959" text-anchor="middle" textLength="37.8" lengthAdjust="spacingAndGlyphs">Chart Title</text>
<line x1="368.1" y1="295.60" x2="495.6" y2="295.60" stroke="#e4e4e4" stroke-width="0.7"/>
<text x="362.9" y="298.10" font-size="5.2" fill="#666" text-anchor="end">0</text>
<line x1="368.10" y1="295.6" x2="368.10" y2="254.40" stroke="#e4e4e4" stroke-width="0.7"/>
<text x="368.10" y="305.6" font-size="5.3" fill="#666" text-anchor="middle">0</text>
<line x1="368.1" y1="285.30" x2="495.6" y2="285.30" stroke="#e4e4e4" stroke-width="0.7"/>
<text x="362.9" y="287.80" font-size="5.2" fill="#666" text-anchor="end">1000</text>
<line x1="399.98" y1="295.6" x2="399.98" y2="254.40" stroke="#e4e4e4" stroke-width="0.7"/>
<text x="399.98" y="305.6" font-size="5.3" fill="#666" text-anchor="middle">5</text>
<line x1="368.1" y1="275.00" x2="495.6" y2="275.00" stroke="#e4e4e4" stroke-width="0.7"/>
<text x="362.9" y="277.50" font-size="5.2" fill="#666" text-anchor="end">2000</text>
<line x1="431.85" y1="295.6" x2="431.85" y2="254.40" stroke="#e4e4e4" stroke-width="0.7"/>
<text x="431.85" y="305.6" font-size="5.3" fill="#666" text-anchor="middle">10</text>
<line x1="368.1" y1="264.70" x2="495.6" y2="264.70" stroke="#e4e4e4" stroke-width="0.7"/>
<text x="362.9" y="267.20" font-size="5.2" fill="#666" text-anchor="end">3000</text>
<line x1="463.73" y1="295.6" x2="463.73" y2="254.40" stroke="#e4e4e4" stroke-width="0.7"/>
<text x="463.73" y="305.6" font-size="5.3" fill="#666" text-anchor="middle">15</text>
<line x1="368.1" y1="254.40" x2="495.6" y2="254.40" stroke="#e4e4e4" stroke-width="0.7"/>
<text x="362.9" y="256.90" font-size="5.2" fill="#666" text-anchor="end">4000</text>
<line x1="495.60" y1="295.6" x2="495.60" y2="254.40" stroke="#e4e4e4" stroke-width="0.7"/>
<text x="495.60" y="305.6" font-size="5.3" fill="#666" text-anchor="middle">20</text>
<circle cx="374.48" cy="275.00" r="1.8" fill="#5aa83a"/>
<circle cx="374.48" cy="269.84" r="1.8" fill="#2f6fd3"/>
<circle cx="374.48" cy="264.70" r="1.8" fill="#fdbf1c"/>
<circle cx="380.85" cy="274.99" r="1.8" fill="#5aa83a"/>
<circle cx="380.85" cy="269.83" r="1.8" fill="#2f6fd3"/>
<circle cx="380.85" cy="264.69" r="1.8" fill="#fdbf1c"/>
<circle cx="387.23" cy="274.98" r="1.8" fill="#5aa83a"/>
<circle cx="387.23" cy="269.82" r="1.8" fill="#2f6fd3"/>
<circle cx="387.23" cy="264.68" r="1.8" fill="#fdbf1c"/>
<circle cx="393.60" cy="274.97" r="1.8" fill="#5aa83a"/>
<circle cx="393.60" cy="269.81" r="1.8" fill="#2f6fd3"/>
<circle cx="393.60" cy="264.67" r="1.8" fill="#fdbf1c"/>
<circle cx="399.98" cy="274.96" r="1.8" fill="#5aa83a"/>
<circle cx="399.98" cy="269.80" r="1.8" fill="#2f6fd3"/>
<circle cx="399.98" cy="264.66" r="1.8" fill="#fdbf1c"/>
<circle cx="406.35" cy="274.95" r="1.8" fill="#5aa83a"/>
<circle cx="406.35" cy="269.79" r="1.8" fill="#2f6fd3"/>
<circle cx="406.35" cy="264.65" r="1.8" fill="#fdbf1c"/>
<circle cx="412.73" cy="274.94" r="1.8" fill="#5aa83a"/>
<circle cx="412.73" cy="269.78" r="1.8" fill="#2f6fd3"/>
<circle cx="412.73" cy="264.64" r="1.8" fill="#fdbf1c"/>
<circle cx="419.10" cy="274.93" r="1.8" fill="#5aa83a"/>
<circle cx="419.10" cy="269.77" r="1.8" fill="#2f6fd3"/>
<circle cx="419.10" cy="264.63" r="1.8" fill="#fdbf1c"/>
<circle cx="425.48" cy="274.92" r="1.8" fill="#5aa83a"/>
<circle cx="425.48" cy="269.76" r="1.8" fill="#2f6fd3"/>
<circle cx="425.48" cy="264.62" r="1.8" fill="#fdbf1c"/>
<circle cx="431.85" cy="274.91" r="1.8" fill="#5aa83a"/>
<circle cx="431.85" cy="269.75" r="1.8" fill="#2f6fd3"/>
<circle cx="431.85" cy="264.61" r="1.8" fill="#fdbf1c"/>
<circle cx="438.23" cy="274.90" r="1.8" fill="#5aa83a"/>
<circle cx="438.23" cy="269.74" r="1.8" fill="#2f6fd3"/>
<circle cx="438.23" cy="264.60" r="1.8" fill="#fdbf1c"/>
<circle cx="444.60" cy="274.89" r="1.8" fill="#5aa83a"/>
<circle cx="444.60" cy="269.73" r="1.8" fill="#2f6fd3"/>
<circle cx="444.60" cy="264.59" r="1.8" fill="#fdbf1c"/>
<circle cx="450.98" cy="274.88" r="1.8" fill="#5aa83a"/>
<circle cx="450.98" cy="269.72" r="1.8" fill="#2f6fd3"/>
<circle cx="450.98" cy="264.58" r="1.8" fill="#fdbf1c"/>
<circle cx="457.35" cy="274.87" r="1.8" fill="#5aa83a"/>
<circle cx="457.35" cy="269.71" r="1.8" fill="#2f6fd3"/>
<circle cx="457.35" cy="264.57" r="1.8" fill="#fdbf1c"/>
<circle cx="463.73" cy="274.86" r="1.8" fill="#5aa83a"/>
<circle cx="463.73" cy="269.70" r="1.8" fill="#2f6fd3"/>
<circle cx="463.73" cy="264.56" r="1.8" fill="#fdbf1c"/>
<circle cx="470.10" cy="274.85" r="1.8" fill="#5aa83a"/>
<circle cx="470.10" cy="269.69" r="1.8" fill="#2f6fd3"/>
<circle cx="470.10" cy="264.55" r="1.8" fill="#fdbf1c"/>
<circle cx="476.48" cy="274.84" r="1.8" fill="#5aa83a"/>
<circle cx="476.48" cy="269.67" r="1.8" fill="#2f6fd3"/>
<circle cx="476.48" cy="264.54" r="1.8" fill="#fdbf1c"/>
<circle cx="391.2" cy="316.4" r="1.4" fill="#5aa83a"/>
<text x="394.0" y="318" font-size="5.8" fill="#5a5a5a" textLength="17" lengthAdjust="spacingAndGlyphs">Series1</text>
<circle cx="418" cy="316.4" r="1.4" fill="#2f6fd3"/>
<text x="420.8" y="318" font-size="5.8" fill="#5a5a5a" textLength="17" lengthAdjust="spacingAndGlyphs">Series2</text>
<circle cx="445.4" cy="316.4" r="1.4" fill="#fdbf1c"/>
<text x="448.2" y="318" font-size="5.8" fill="#5a5a5a" textLength="17" lengthAdjust="spacingAndGlyphs">Series3</text>
<rect x="522.3" y="227.7" width="158.6" height="94" fill="url(#dk)"/>
<text x="601.4" y="242" font-size="9.2" font-weight="bold" fill="#f4f4f4" text-anchor="middle" textLength="50.5" lengthAdjust="spacing">Chart Title</text>
<rect x="537.3" y="252.7" width="32.98" height="40.1" fill="#5c6776"/>
<rect x="570.28" y="252.7" width="41.21" height="40.1" fill="#365c86"/>
<rect x="611.49" y="252.7" width="49.41" height="40.1" fill="#31527a"/>
<rect x="537.3" y="253.25" width="32.98" height="1.0" fill="#b9c4d1"/>
<rect x="570.28" y="253.25" width="41.21" height="1.3" fill="#4583c1"/>
<rect x="611.49" y="253.25" width="49.41" height="1.2" fill="#3f80c4"/>
<rect x="537.3" y="255.61" width="32.98" height="1.0" fill="#b9c4d1"/>
<rect x="570.28" y="255.61" width="41.21" height="1.3" fill="#4583c1"/>
<rect x="611.49" y="255.61" width="49.41" height="1.2" fill="#3f80c4"/>
<rect x="537.3" y="257.97" width="32.98" height="1.0" fill="#b9c4d1"/>
<rect x="570.28" y="257.97" width="41.21" height="1.3" fill="#4583c1"/>
<rect x="611.49" y="257.97" width="49.41" height="1.2" fill="#3f80c4"/>
<rect x="537.3" y="260.33" width="32.98" height="1.0" fill="#b9c4d1"/>
<rect x="570.28" y="260.33" width="41.21" height="1.3" fill="#4583c1"/>
<rect x="611.49" y="260.33" width="49.41" height="1.2" fill="#3f80c4"/>
<rect x="537.3" y="262.69" width="32.98" height="1.0" fill="#b9c4d1"/>
<rect x="570.28" y="262.69" width="41.21" height="1.3" fill="#4583c1"/>
<rect x="611.49" y="262.69" width="49.41" height="1.2" fill="#3f80c4"/>
<rect x="537.3" y="265.05" width="32.98" height="1.0" fill="#b9c4d1"/>
<rect x="570.28" y="265.05" width="41.21" height="1.3" fill="#4583c1"/>
<rect x="611.49" y="265.05" width="49.41" height="1.2" fill="#3f80c4"/>
<rect x="537.3" y="267.41" width="32.98" height="1.0" fill="#b9c4d1"/>
<rect x="570.28" y="267.41" width="41.21" height="1.3" fill="#4583c1"/>
<rect x="611.49" y="267.41" width="49.41" height="1.2" fill="#3f80c4"/>
<rect x="537.3" y="269.77" width="32.98" height="1.0" fill="#b9c4d1"/>
<rect x="570.28" y="269.77" width="41.21" height="1.3" fill="#4583c1"/>
<rect x="611.49" y="269.77" width="49.41" height="1.2" fill="#3f80c4"/>
<rect x="537.3" y="272.13" width="32.98" height="1.0" fill="#b9c4d1"/>
<rect x="570.28" y="272.13" width="41.21" height="1.3" fill="#4583c1"/>
<rect x="611.49" y="272.13" width="49.41" height="1.2" fill="#3f80c4"/>
<rect x="537.3" y="274.49" width="32.98" height="1.0" fill="#b9c4d1"/>
<rect x="570.28" y="274.49" width="41.21" height="1.3" fill="#4583c1"/>
<rect x="611.49" y="274.49" width="49.41" height="1.2" fill="#3f80c4"/>
<rect x="537.3" y="276.85" width="32.98" height="1.0" fill="#b9c4d1"/>
<rect x="570.28" y="276.85" width="41.21" height="1.3" fill="#4583c1"/>
<rect x="611.49" y="276.85" width="49.41" height="1.2" fill="#3f80c4"/>
<rect x="537.3" y="279.21" width="32.98" height="1.0" fill="#b9c4d1"/>
<rect x="570.28" y="279.21" width="41.21" height="1.3" fill="#4583c1"/>
<rect x="611.49" y="279.21" width="49.41" height="1.2" fill="#3f80c4"/>
<rect x="537.3" y="281.57" width="32.98" height="1.0" fill="#b9c4d1"/>
<rect x="570.28" y="281.57" width="41.21" height="1.3" fill="#4583c1"/>
<rect x="611.49" y="281.57" width="49.41" height="1.2" fill="#3f80c4"/>
<rect x="537.3" y="283.93" width="32.98" height="1.0" fill="#b9c4d1"/>
<rect x="570.28" y="283.93" width="41.21" height="1.3" fill="#4583c1"/>
<rect x="611.49" y="283.93" width="49.41" height="1.2" fill="#3f80c4"/>
<rect x="537.3" y="286.29" width="32.98" height="1.0" fill="#b9c4d1"/>
<rect x="570.28" y="286.29" width="41.21" height="1.3" fill="#4583c1"/>
<rect x="611.49" y="286.29" width="49.41" height="1.2" fill="#3f80c4"/>
<rect x="537.3" y="288.65" width="32.98" height="1.0" fill="#b9c4d1"/>
<rect x="570.28" y="288.65" width="41.21" height="1.3" fill="#4583c1"/>
<rect x="611.49" y="288.65" width="49.41" height="1.2" fill="#3f80c4"/>
<rect x="537.3" y="291.01" width="32.98" height="1.0" fill="#b9c4d1"/>
<rect x="570.28" y="291.01" width="41.21" height="1.3" fill="#4583c1"/>
<rect x="611.49" y="291.01" width="49.41" height="1.2" fill="#3f80c4"/>
<text x="535" y="293.74" font-size="5.6" font-weight="bold" fill="#f0f0f0" text-anchor="end">1</text>
<text x="535" y="284.30" font-size="5.6" font-weight="bold" fill="#f0f0f0" text-anchor="end">5</text>
<text x="535" y="274.86" font-size="5.6" font-weight="bold" fill="#f0f0f0" text-anchor="end">9</text>
<text x="535" y="265.42" font-size="5.6" font-weight="bold" fill="#f0f0f0" text-anchor="end">13</text>
<text x="535" y="255.98" font-size="5.6" font-weight="bold" fill="#f0f0f0" text-anchor="end">17</text>
<text x="537.3" y="302.2" font-size="5.6" font-weight="bold" fill="#f0f0f0" text-anchor="middle">0</text>
<text x="570.0" y="302.2" font-size="5.6" font-weight="bold" fill="#f0f0f0" text-anchor="middle">2000</text>
<text x="602.7" y="302.2" font-size="5.6" font-weight="bold" fill="#f0f0f0" text-anchor="middle">4000</text>
<text x="635.4" y="302.2" font-size="5.6" font-weight="bold" fill="#f0f0f0" text-anchor="middle">6000</text>
<text x="668.1" y="302.2" font-size="5.6" font-weight="bold" fill="#f0f0f0" text-anchor="middle">8000</text>
<rect x="565.4" y="311" width="3" height="3" fill="#b9d2ec"/>
<text x="569.5" y="314.5" font-size="5.6" font-weight="bold" fill="#ededed" textLength="17.2" lengthAdjust="spacingAndGlyphs">Series1</text>
<rect x="592.4" y="311" width="3" height="3" fill="#5b9bd5"/>
<text x="596.5" y="314.5" font-size="5.6" font-weight="bold" fill="#ededed" textLength="17.2" lengthAdjust="spacingAndGlyphs">Series2</text>
<rect x="619.1999999999999" y="311" width="3" height="3" fill="#4a8bd0"/>
<text x="623.3" y="314.5" font-size="5.6" font-weight="bold" fill="#ededed" textLength="17.2" lengthAdjust="spacingAndGlyphs">Series3</text>
</svg>
<div class="a" style="left:756px;top:58px;width:11px;height:332.5px;background:#f7f7f7;border-left:1px solid #dadada"></div>
<div class="a" style="left:758px;top:51px;width:7.5px;height:7.3px;background:#fff;border:1px solid #cdcdcd"></div>
<div class="a" style="left:760.2px;top:53.4px;border-left:1.6px solid transparent;border-right:1.6px solid transparent;border-bottom:2px solid #666"></div>
<div class="a" style="left:758px;top:58.6px;width:7.5px;height:311.4px;background:#fff;border:1px solid #cdcdcd"></div>
<div class="a" style="left:758px;top:383px;width:7.5px;height:7.2px;background:#fff;border:1px solid #cdcdcd"></div>
<div class="a" style="left:760.2px;top:385.8px;border-left:1.6px solid transparent;border-right:1.6px solid transparent;border-top:2px solid #666"></div>
<div class="a" style="left:1px;top:390px;width:766px;height:12.4px;background:#efedf3;border-top:1px solid #d0d0d0"></div>
<svg class="a" style="left:11px;top:393px" width="24" height="8" viewBox="0 0 24 8"><path d="M3.6 1.6L1.6 3.8L3.6 6M13.6 1.6L15.6 3.8L13.6 6" fill="none" stroke="#cfcfd4" stroke-width="0.9"/></svg>
<div class="a" style="left:49px;top:391.5px;width:18px;height:10.3px;background:#1f4e79;color:#fff;font-size:6.5px;line-height:10.4px;text-align:center;-webkit-text-stroke:0.25px #fff">Pie</div>
<div class="a" style="left:69.5px;top:391.5px;width:17.5px;height:10.3px;background:#2e75b6;color:#cfe0f3;font-size:6.5px;line-height:10.4px;text-align:center;-webkit-text-stroke:0.25px #cfe0f3">3D</div>
<div class="a" style="left:89px;top:391.5px;width:19px;height:10.3px;background:#9dc3e6;color:#223;font-size:6.5px;line-height:10.4px;text-align:center;-webkit-text-stroke:0.25px #223">Bar</div>
<div class="a" style="left:110.8px;top:391.5px;width:26.200000000000003px;height:10.3px;background:#c5e0f7;color:#334;font-size:6.5px;line-height:10.4px;text-align:center;-webkit-text-stroke:0.25px #334">Linear</div>
<div class="a" style="left:138.7px;top:390px;width:32px;height:12px;background:#fff;border-left:1px solid #d0d0d0;border-right:1px solid #d0d0d0;border-bottom:1.4px solid #217346;color:#217346;font-size:6px;line-height:13.2px;text-align:center;font-weight:bold">Bubble</div>
<svg class="a" style="left:186px;top:392.4px" width="9" height="9" viewBox="0 0 9 9"><circle cx="4.4" cy="4.4" r="3.6" fill="none" stroke="#777" stroke-width="0.7"/><path d="M2.4 4.4H6.4M4.4 2.4V6.4" stroke="#666" stroke-width="0.9"/></svg>
<div class="a" style="left:460px;top:394.5px;width:1px;height:5px;border-left:1px dotted #999"></div>
<div class="a" style="left:468.5px;top:393.5px;width:7px;height:7px;background:#fff;border:1px solid #c4c4c4"></div>
<div class="a" style="left:470.6px;top:395.5px;border-top:1.5px solid transparent;border-bottom:1.5px solid transparent;border-right:1.9px solid #666"></div>
<div class="a" style="left:475.5px;top:393.5px;width:258.5px;height:7px;background:#fff;border:1px solid #c4c4c4"></div>
<div class="a" style="left:734px;top:393.5px;width:17px;height:7px;background:#e4e4e4"></div>
<div class="a" style="left:751px;top:393.5px;width:6.5px;height:7px;background:#fff;border:1px solid #c4c4c4"></div>
<div class="a" style="left:753.5px;top:395.5px;border-top:1.5px solid transparent;border-bottom:1.5px solid transparent;border-left:1.9px solid #666"></div>
<div class="a" style="left:1px;top:403px;width:766px;height:10.7px;background:#217346"></div>
<svg class="a" style="left:0;top:403px" width="40" height="11" viewBox="0 0 40 11" font-family="Liberation Sans, sans-serif"><text x="3.3" y="7.4" font-size="5.5" fill="#c6dccd" textLength="15.2" lengthAdjust="spacingAndGlyphs">READY</text></svg>
<svg class="a" style="left:28px;top:404.5px;opacity:0.65" width="8" height="8" viewBox="0 0 8 8"><rect x="0.6" y="1.4" width="5.6" height="5.6" fill="none" stroke="#d6e8dc" stroke-width="0.8"/><path d="M0.6 3.2H6.2M0.6 5H6.2M2.5 3.2V7M4.4 3.2V7" stroke="#d6e8dc" stroke-width="0.6"/><rect x="0.6" y="0.6" width="3" height="1.2" fill="#d6e8dc"/></svg>
<div class="a" style="left:627px;top:403px;width:18px;height:10.7px;background:#1a5c38"></div>
<svg class="a" style="left:632px;top:404.8px" width="8" height="8" viewBox="0 0 8 8"><rect x="0.5" y="0.5" width="7" height="6.4" fill="none" stroke="#cfe3d6" stroke-width="0.8"/><path d="M0.5 2.6H7.5M0.5 4.7H7.5M2.8 0.5V6.9M5.2 0.5V6.9" stroke="#cfe3d6" stroke-width="0.6"/></svg>
<svg class="a" style="left:650.5px;top:404.8px" width="8" height="8" viewBox="0 0 8 8"><rect x="0.5" y="0.5" width="7" height="6.4" fill="#8fb8a0" stroke="#cfe3d6" stroke-width="0.8"/><path d="M2.8 0.5V6.9M5.2 0.5V6.9" stroke="#cfe3d6" stroke-width="0.6"/></svg>
<svg class="a" style="left:668.5px;top:404.8px" width="8" height="8" viewBox="0 0 8 8"><rect x="0.5" y="0.5" width="7" height="6.4" fill="none" stroke="#eef6f0" stroke-width="0.8"/><rect x="1.4" y="0.5" width="2" height="3.6" fill="#fff"/><rect x="4.6" y="0.5" width="2" height="3.6" fill="#fff"/></svg>
<div class="a" style="left:684px;top:408.2px;width:2.6px;height:0.9px;background:#e3efe7"></div>
<div class="a" style="left:689px;top:408.3px;width:47px;height:0.8px;background:#9cc2ab"></div>
<div class="a" style="left:711.6px;top:405.3px;width:2.2px;height:6.4px;background:#e9f2ec"></div>
<div class="a" style="left:738.6px;top:408.2px;width:3.6px;height:0.9px;background:#fff"></div>
<div class="a" style="left:739.95px;top:406.8px;width:0.9px;height:3.6px;background:#fff"></div>
<div class="t" style="left:750.5px;top:405.8px;font-size:5.3px;color:#eaf3ed">100%</div>
<div class="a" style="left:0;top:0;width:768px;height:1px;background:#636363"></div>
<div class="a" style="left:0;top:0;width:1px;height:415px;background:#636363"></div>
<div class="a" style="left:767px;top:0;width:1px;height:415px;background:#6a6a6a"></div>
<div class="a" style="left:0;top:413.6px;width:768px;height:1.4px;background:#4d5a50"></div>
</body></html>
